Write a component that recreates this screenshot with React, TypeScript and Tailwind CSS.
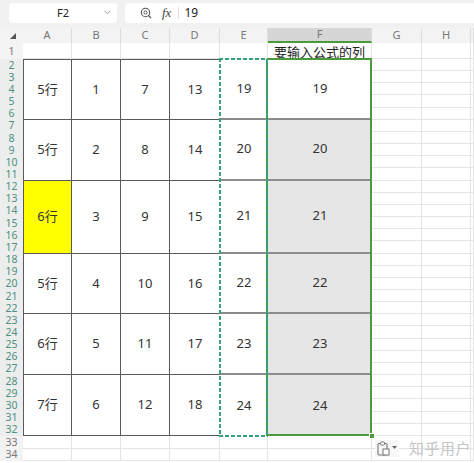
import React from "react";

const FONT = { fontFamily: '"Noto Sans", "Noto Sans CJK SC", sans-serif' } as React.CSSProperties;

const BLOCK_H = ["h-[60.8px]", "h-[60.8px]", "h-[72.96px]", "h-[60.8px]", "h-[60.8px]", "h-[60.8px]"];
const A_VALS = ["5行", "5行", "6行", "5行", "6行", "7行"];
const B_VALS = ["1", "2", "3", "4", "5", "6"];
const C_VALS = ["7", "8", "9", "10", "11", "12"];
const D_VALS = ["13", "14", "15", "16", "17", "18"];
const E_VALS = ["19", "20", "21", "22", "23", "24"];
const F_VALS = ["19", "20", "21", "22", "23", "24"];

const MID_ROWS = Array.from({ length: 31 }, (_, i) => i + 2);

function ColHeader({ label, w, active }: { label: string; w: string; active?: boolean }) {
  return (
    <div
      className={`${w} h-[15px] flex items-center justify-center text-[11px] text-[#777] border-r border-[#dcdcdc] ${
        active ? "bg-[#d6d6d6] border-b-2 border-b-[#4a9a3c]" : "bg-[#f3f3f3]"
      }`}
    >
      {label}
    </div>
  );
}

function FaintCell({ h, children }: { h: string; children?: React.ReactNode }) {
  return <div className={`${h} border-b border-r border-[#e4e4e4]`}>{children}</div>;
}

function DataColumn({
  label,
  w,
  vals,
  leftBorder,
  rightBorder,
}: {
  label: string;
  w: string;
  vals: string[];
  leftBorder?: boolean;
  rightBorder?: boolean;
}) {
  return (
    <div className={`${w} flex flex-col shrink-0`}>
      <ColHeader label={label} w="w-full" />
      <FaintCell h="h-[16px]" />
      {vals.map((v, i) => (
        <div
          key={i}
          className={`${BLOCK_H[i]} flex items-center justify-center text-[13px] text-[#333] border-b border-[#5a5a5a] ${
            i === 0 ? "border-t" : ""
          } ${leftBorder ? "border-l" : ""} ${rightBorder ? "border-r" : ""} ${
            label === "A" && i === 2 ? "bg-[#ffff00]" : "bg-white"
          }`}
        >
          {v}
        </div>
      ))}
      <FaintCell h="h-[13px]" />
      <FaintCell h="h-[12px]" />
    </div>
  );
}

function ColumnE() {
  return (
    <div className="w-[48px] flex flex-col shrink-0">
      <ColHeader label="E" w="w-full" />
      <FaintCell h="h-[16px]" />
      <div className="relative flex flex-col">
        {E_VALS.map((v, i) => (
          <div
            key={i}
            className={`${BLOCK_H[i]} flex items-center justify-center text-[13px] text-[#333] bg-white ${
              i < 5 ? "border-b-2 border-[#8c8c8c]" : ""
            }`}
          >
            {v}
          </div>
        ))}
        {/* copy marquee */}
        <div className="absolute -left-px -top-px right-0 h-[1.5px] bg-[repeating-linear-gradient(to_right,#36a081_0_4px,transparent_4px_6px)] pointer-events-none" />
        <div className="absolute -left-px -bottom-px right-0 h-[1.5px] bg-[repeating-linear-gradient(to_right,#36a081_0_4px,transparent_4px_6px)] pointer-events-none" />
        <div className="absolute -left-px -top-px bottom-0 w-[1.5px] bg-[repeating-linear-gradient(to_bottom,#36a081_0_4px,transparent_4px_6px)] pointer-events-none" />
      </div>
      <FaintCell h="h-[13px]" />
      <FaintCell h="h-[12px]" />
    </div>
  );
}

function ColumnF() {
  return (
    <div className="w-[104px] flex flex-col shrink-0">
      <ColHeader label="F" w="w-full" active />
      <div className="h-[16px] border-r border-[#e4e4e4] flex items-end justify-center text-[13px] leading-[14px] text-[#222] whitespace-nowrap">
        要输入公式的列
      </div>
      <div className="relative flex flex-col">
        {F_VALS.map((v, i) => (
          <div
            key={i}
            className={`${BLOCK_H[i]} flex items-center justify-center text-[13px] text-[#333] ${
              i === 0 ? "bg-white" : "bg-[#e6e6e6]"
            } ${i < 5 ? "border-b-2 border-[#8c8c8c]" : ""}`}
          >
            {v}
          </div>
        ))}
        <div className="absolute -left-[2px] top-0 bottom-0 w-[2px] bg-[repeating-linear-gradient(to_bottom,#36a081_0_4px,#4a9a3c_4px_6px)] pointer-events-none" />
        <div className="absolute left-0 -top-px right-0 bottom-0 border-2 border-l-0 border-[#4a9a3c] pointer-events-none" />
        <div className="absolute -right-[3px] -bottom-[3px] w-[6px] h-[6px] bg-[#4a9a3c] border border-white" />
      </div>
      <FaintCell h="h-[13px]" />
      <FaintCell h="h-[12px]" />
    </div>
  );
}

function EmptyColumn({ label, w }: { label: string; w: string }) {
  return (
    <div className={`${w} flex flex-col`}>
      <ColHeader label={label} w="w-full" />
      <FaintCell h="h-[16px]" />
      {MID_ROWS.map((r) => (
        <FaintCell key={r} h="h-[12.16px]" />
      ))}
      <FaintCell h="h-[13px]" />
      <FaintCell h="h-[12px]" />
    </div>
  );
}

function RowHeaders() {
  return (
    <div className="w-[23px] flex flex-col shrink-0 text-[10.5px] leading-[11px]">
      <div className="h-[15px] bg-[#f3f3f3] relative flex items-end justify-end pr-[7px] pb-[4px]">
        <svg width="6" height="6" viewBox="0 0 6 6">
          <polygon points="6,0 6,6 0,6" fill="#555" />
        </svg>
      </div>
      <div className="h-[16px] bg-[#f3f3f3] flex items-center justify-center text-[#777]">1</div>
      {MID_ROWS.map((r) => (
        <div key={r} className="h-[12.16px] bg-[#ebeeec] flex items-center justify-center text-[#4f8f82] overflow-hidden">
          {r}
        </div>
      ))}
      <div className="h-[13px] bg-[#f3f3f3] flex items-center justify-center text-[#777]">33</div>
      <div className="h-[12px] bg-[#f3f3f3] flex items-center justify-center text-[#777]">34</div>
    </div>
  );
}

function TopBar() {
  return (
    <div className="h-[28px] bg-[#f1f1f1] flex items-start pt-[3px] pl-[9px] gap-[8px]">
      <div className="w-[108px] h-[20px] bg-white rounded-[4px] flex items-center relative">
        <span className="flex-1 text-center text-[11px] text-[#222]">F2</span>
        <svg className="absolute right-[6px] top-[7px]" width="7" height="5" viewBox="0 0 7 5">
          <polyline points="0.5,0.8 3.5,3.8 6.5,0.8" fill="none" stroke="#999" strokeWidth="1" />
        </svg>
      </div>
      <div className="flex-1 h-[20px] bg-white rounded-l-[4px] flex items-center">
        <svg className="ml-[15px]" width="12" height="12" viewBox="0 0 12 12">
          <circle cx="5.5" cy="5.5" r="4.2" fill="none" stroke="#555" strokeWidth="1.1" />
          <circle cx="5.5" cy="5.5" r="1.6" fill="none" stroke="#555" strokeWidth="1" />
          <line x1="8.5" y1="8.5" x2="11" y2="11" stroke="#555" strokeWidth="1.2" />
        </svg>
        <span
          className="ml-[10px] text-[13px] italic text-[#444]"
          style={{ fontFamily: '"Liberation Serif", serif' }}
        >
          fx
        </span>
        <div className="ml-[7px] w-px h-[12px] bg-[#ddd]" />
        <span className="ml-[5px] text-[12px] text-[#222]">19</span>
      </div>
    </div>
  );
}

export default function App() {
  return (
    <div className="w-[474px] h-[463px] overflow-hidden bg-white relative" style={FONT}>
      <TopBar />
      <div className="flex">
        <RowHeaders />
        <DataColumn label="A" w="w-[49px]" vals={A_VALS} leftBorder rightBorder />
        <DataColumn label="B" w="w-[49px]" vals={B_VALS} rightBorder />
        <DataColumn label="C" w="w-[49px]" vals={C_VALS} rightBorder />
        <DataColumn label="D" w="w-[50px]" vals={D_VALS} />
        <ColumnE />
        <ColumnF />
        <EmptyColumn label="G" w="w-[50px]" />
        <EmptyColumn label="H" w="w-[49px]" />
        <EmptyColumn label="" w="flex-1" />
      </div>
      <div className="absolute left-[375px] top-[437px] flex items-center gap-[10px]">
        <div className="flex items-center gap-[2px] px-[2px] py-[1px] bg-[#f7f7f7] rounded-[2px]">
          <svg width="13" height="15" viewBox="0 0 13 15">
            <rect x="1" y="2.5" width="9" height="11.5" rx="1" fill="none" stroke="#777" strokeWidth="1.1" />
            <rect x="3.5" y="1" width="4" height="3" rx="0.6" fill="#fff" stroke="#777" strokeWidth="1" />
            <rect x="6" y="8" width="6" height="6" fill="#fff" stroke="#777" strokeWidth="1" />
          </svg>
          <svg width="5" height="4" viewBox="0 0 5 4">
            <polygon points="0,0 5,0 2.5,3" fill="#666" />
          </svg>
        </div>
        <span className="text-[15px] text-[#c4c4c4] tracking-[0.5px]">知乎用户</span>
      </div>
    </div>
  );
}
